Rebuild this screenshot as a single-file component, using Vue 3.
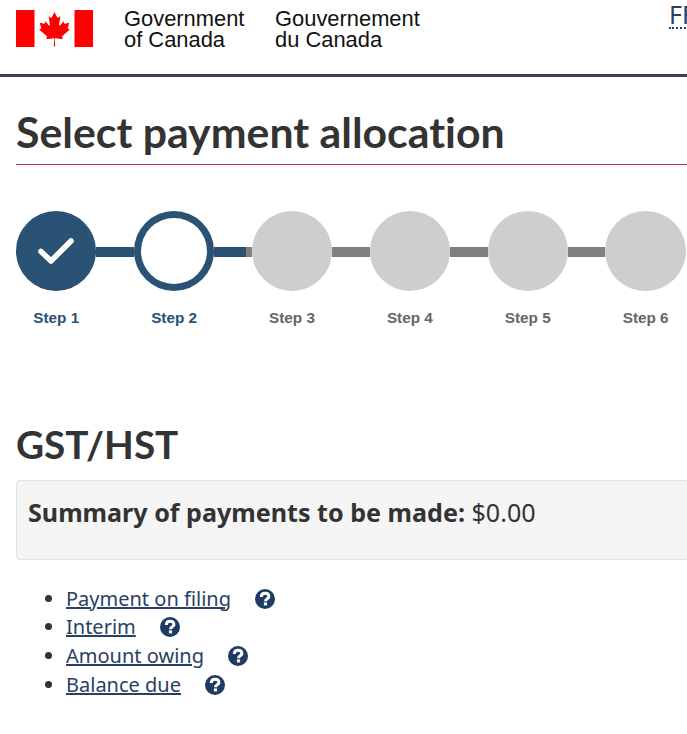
<script setup>
const steps = [
  { label: 'Step 1', state: 'done' },
  { label: 'Step 2', state: 'current' },
  { label: 'Step 3', state: 'todo' },
  { label: 'Step 4', state: 'todo' },
  { label: 'Step 5', state: 'todo' },
  { label: 'Step 6', state: 'todo' },
]
const links = ['Payment on filing', 'Interim', 'Amount owing', 'Balance due']
</script>

<template>
  <div class="page">
    <header class="site-header">
      <svg class="flag" viewBox="0 0 77 37" width="77" height="37" aria-label="Canada flag">
        <rect x="0" y="0" width="18.5" height="37" fill="#ff0000" />
        <rect x="58.5" y="0" width="18.5" height="37" fill="#ff0000" />
        <path transform="translate(38.5 2) scale(.88 .93) translate(-38.5 -2.5)" fill="#ff0000" d="M38.5 2.5l-3 5.6c-.3.6-1 .6-1.600.2l-2.200-1.200 1.600 8.700c.3 1.600-.8 1.600-1.300.900l-3.800-4.300-.6 2.200c-.1.300-.4.600-.9.500l-4.900-1 1.300 4.700c.3 1 .5 1.500-.3 1.800l-1.700.8 8.400 6.800c.3.300.5.700.4 1.100l-.7 2.400 8.400-1c.3 0 .6.200.6.500l-.4 8.300h1.400l-.4-8.300c0-.3.300-.5.600-.5l8.400 1-.7-2.400c-.1-.4.100-.8.400-1.100l8.400-6.800-1.700-.8c-.8-.3-.6-.8-.3-1.800l1.300-4.700-4.900 1c-.5.1-.8-.2-.9-.5l-.6-2.200-3.800 4.300c-.5.7-1.600.7-1.300-.9l1.600-8.700-2.200 1.200c-.6.400-1.300.4-1.600-.2z" />
      </svg>
      <div class="wordmark wordmark-en">Government<br />of Canada</div>
      <div class="wordmark wordmark-fr">Gouvernement<br />du Canada</div>
      <a class="lang" href="#">FR</a>
    </header>

    <main class="content">
      <h1 class="title">Select payment allocation</h1>

      <ol class="stepper">
        <template v-for="(step, i) in steps" :key="step.label">
          <li v-if="i > 0" class="line" :class="{ 'line-active': i === 1, 'line-partial': i === 2 }"></li>
          <li class="step" :class="'step-' + step.state">
            <span class="dot">
              <svg v-if="step.state === 'done'" viewBox="0 0 36 28" width="36" height="28">
                <path d="M3 14.500L13 24L33 4" fill="none" stroke="#fff" stroke-width="5.500" stroke-linecap="round" stroke-linejoin="round" />
              </svg>
            </span>
            <span class="label">{{ step.label }}</span>
          </li>
        </template>
      </ol>

      <h2 class="subtitle">GST/HST</h2>

      <div class="well"><strong>Summary of payments to be made:</strong> $0.00</div>

      <ul class="links">
        <li v-for="link in links" :key="link">
          <a href="#">{{ link }}</a>
          <svg class="help" viewBox="0 0 20 20" width="20" height="20">
            <circle cx="10" cy="10" r="10" fill="#1f3a63" />
            <path d="M6.300 8C6.300 5.500 8 4.200 10.100 4.200C12.300 4.200 13.900 5.500 13.900 7.400C13.900 9.900 10.500 9.800 10.500 12.200" fill="none" stroke="#fff" stroke-width="3" />
            <rect x="8.900" y="13.400" width="3.200" height="3" fill="#fff" />
          </svg>
        </li>
      </ul>
    </main>
  </div>
</template>

<style scoped>
.page {
  width: 687px;
  height: 734px;
  overflow: hidden;
  background: #fff;
  color: #333;
  font-family: "Noto Sans", sans-serif;
}
.site-header {
  position: relative;
  display: flex;
  align-items: flex-start;
  padding: 10px 0 0 16px;
  height: 64px;
  border-bottom: 3px solid #3a4252;
}
.flag { flex: none; }
.wordmark {
  font-family: "Liberation Sans", sans-serif;
  font-size: 21.900px;
  line-height: 21px;
  color: #111;
  margin-top: -2px;
}
.wordmark-en { margin-left: 31px; width: 151px; flex: none; }
.wordmark-fr { flex: none; }
.lang {
  position: absolute;
  left: 669px;
  top: 2px;
  font-size: 25px;
  line-height: 25px;
  color: #284162;
  text-decoration: none;
  border-bottom: 2px dotted #284162;
}
.content { padding-left: 16px; }
.title {
  margin: 30px 0 0;
  font-family: Lato, sans-serif;
  font-weight: 700;
  font-size: 42.800px;
  line-height: 50px;
  padding-bottom: 7px;
  border-bottom: 1px solid #af3c43;
  color: #333;
  white-space: nowrap;
  font-variant-ligatures: none;
}
.stepper {
  display: flex;
  list-style: none;
  margin: 46px 0 0;
  padding: 0;
  width: 700px;
}
.step {
  flex: none;
  width: 80.400px;
  display: flex;
  flex-direction: column;
  align-items: center;
}
.dot {
  box-sizing: border-box;
  width: 80.400px;
  height: 80px;
  border-radius: 50%;
  background: #cecece;
  display: flex;
  align-items: center;
  justify-content: center;
}
.step-done .dot { background: #2a5275; }
.step-current .dot { background: #fff; border: 7px solid #2a5275; }
.label {
  font-family: "Liberation Sans", sans-serif;
  font-weight: 700;
  font-size: 15.300px;
  line-height: 20px;
  margin-top: 17px;
  color: #666;
}
.step-done .label, .step-current .label { color: #2a5275; }
.line {
  flex: none;
  width: 37.500px;
  height: 10px;
  margin-top: 36px;
  background: #808080;
}
.line-active { background: #2a5275; }
.line-partial { background: linear-gradient(to right, #2a5275 32px, #808080 32px); }
.subtitle {
  margin: 94px 0 0;
  font-family: Lato, sans-serif;
  font-weight: 700;
  font-size: 38.700px;
  line-height: 44px;
  color: #333;
}
.well {
  box-sizing: border-box;
  margin-top: 14px;
  width: 720px;
  height: 80px;
  padding: 15px 11px;
  background: #f5f5f5;
  border: 1px solid #e3e3e3;
  border-radius: 4px;
  font-size: 25.100px;
  line-height: 33px;
}
.links {
  margin: 24.700px 0 0;
  padding: 0 0 0 50px;
  font-size: 20px;
  line-height: 28.700px;
}
.links a { color: #284162; }
.help {
  display: inline-block;
  vertical-align: -3px;
  margin-left: 24px;
}
</style>

<style>
html, body { margin: 0; overflow: hidden; }
</style>
